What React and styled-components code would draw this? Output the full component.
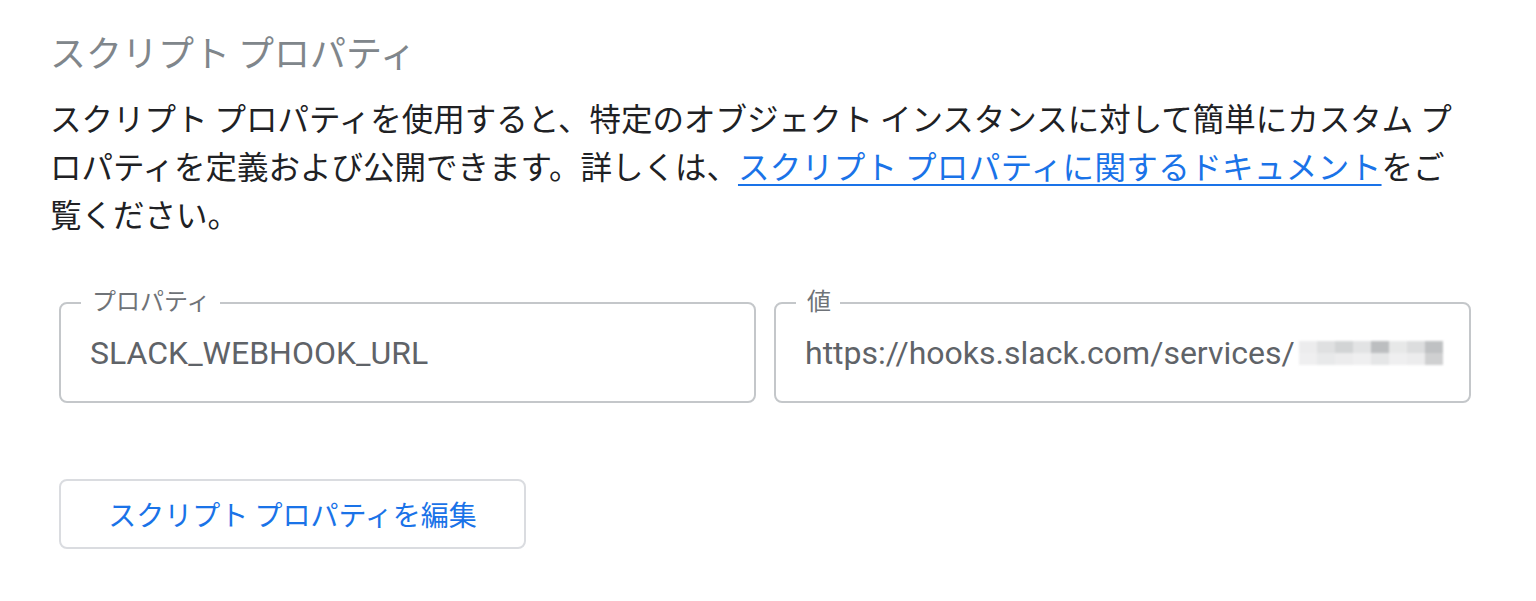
import styled, { createGlobalStyle } from 'styled-components';

const GlobalStyle = createGlobalStyle`
  html, body {
    margin: 0;
    padding: 0;
    background: #fff;
  }
  body {
    font-family: Roboto, 'Noto Sans CJK JP', sans-serif;
    -webkit-font-smoothing: antialiased;
  }
`;

const Section = styled.section`
  padding: 27px 0 0 50px;
`;

const Title = styled.h2`
  margin: 0;
  font-family: 'Noto Sans CJK JP', sans-serif;
  font-size: 36px;
  font-weight: 400;
  line-height: 48px;
  color: #80868b;
`;

const Description = styled.p`
  width: 1406px;
  margin: 18px 0 0;
  font-family: 'Noto Sans CJK JP', sans-serif;
  font-size: 31.5px;
  line-height: 48px;
  color: #202124;
  line-break: anywhere;

  a {
    color: #1a73e8;
    text-decoration: underline;
    text-underline-offset: 5px;
    text-decoration-thickness: 2px;
    letter-spacing: 0.4px;
  }
`;

const FieldRow = styled.div`
  display: grid;
  grid-template-columns: 1fr 1fr;
  gap: 18px;
  width: 1412px;
  margin: 65px 0 0 9px;
`;

const Field = styled.div`
  position: relative;
  height: 101px;
  box-sizing: border-box;
  border: 2px solid #c4c7ca;
  border-radius: 8px;
  display: flex;
  align-items: center;
  padding: 0 0 0 29px;
`;

/* sits over the top border, cutting the notch */
const Label = styled.span`
  position: absolute;
  top: -19px;
  left: 20px;
  padding: 0 9px 0 11px;
  background: #fff;
  font-family: 'Noto Sans CJK JP', sans-serif;
  font-size: 24px;
  line-height: 30px;
  color: #6f7378;
`;

const Value = styled.span`
  font-family: Roboto, 'Noto Sans CJK JP', sans-serif;
  font-size: 32px;
  color: #5f6368;
  white-space: nowrap;
  display: flex;
  align-items: center;
`;

const Blur = styled.svg`
  display: block;
  margin-left: 2px;
  filter: blur(1.2px);
`;

const EditButton = styled.button`
  display: block;
  margin: 76px 0 0 9px;
  width: 467px;
  height: 70px;
  box-sizing: border-box;
  border: 2px solid #dadce0;
  border-radius: 8px;
  background: #fff;
  font-family: 'Noto Sans CJK JP', sans-serif;
  font-size: 28px;
  color: #1a73e8;
  padding: 0;
  cursor: pointer;
`;

const blocks = [
  [0, 0, 0.12], [18, 0, 0.2], [36, 0, 0.28], [54, 0, 0.18], [72, 0, 0.42], [90, 0, 0.15], [108, 0, 0.22], [126, 0, 0.4],
  [0, 12, 0.1], [18, 12, 0.14], [36, 12, 0.12], [54, 12, 0.1], [72, 12, 0.16], [90, 12, 0.1], [108, 12, 0.12], [126, 12, 0.3],
];

const Redacted = () => (
  <Blur width="150" height="28" viewBox="0 0 150 28">
    {blocks.map(([x, y, o], i) => (
      <rect key={i} x={x + 2} y={y + 2} width="18" height="12" fill="#5f6368" opacity={o} />
    ))}
  </Blur>
);

export default function App() {
  return (
    <>
      <GlobalStyle />
      <Section>
        <Title>スクリプト プロパティ</Title>
        <Description>
          スクリプト プロパティを使用すると、特定のオブジェクト インスタンスに対して簡単にカスタム プロパティを定義および公開できます。詳しくは、
          <a href="#docs">スクリプト プロパティに関するドキュメント</a>
          をご覧ください。
        </Description>
        <FieldRow>
          <Field>
            <Label>プロパティ</Label>
            <Value>SLACK_WEBHOOK_URL</Value>
          </Field>
          <Field>
            <Label>値</Label>
            <Value>
              https://hooks.slack.com/services/
              <Redacted />
            </Value>
          </Field>
        </FieldRow>
        <EditButton>スクリプト プロパティを編集</EditButton>
      </Section>
    </>
  );
}
